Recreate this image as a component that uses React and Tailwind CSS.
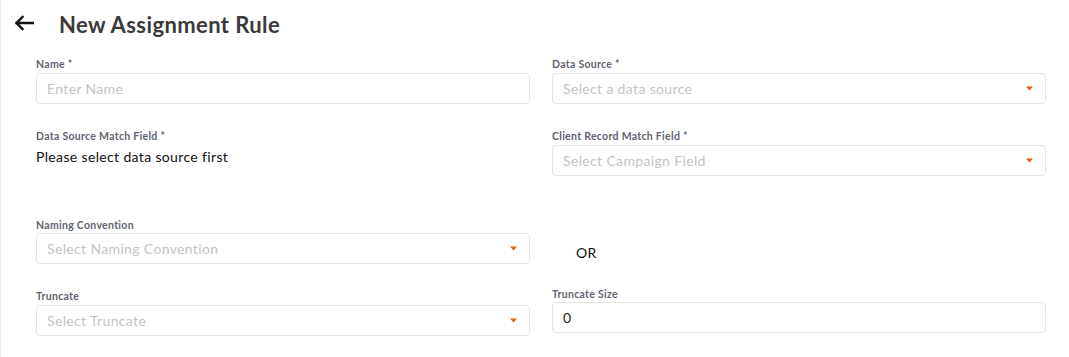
import React from "react";

const Caret = () => (
  <svg width="7" height="5" viewBox="0 0 7 5" className="shrink-0">
    <path d="M0 0.5 L7 0.5 L3.5 4.5 Z" fill="#e2620c" />
  </svg>
);

const Label = ({ children, className = "" }) => (
  <label className={`block text-[10.5px] font-bold tracking-[0.3px] text-[#5f6470] leading-[14px] ${className}`}>
    {children}
  </label>
);

const SelectBox = ({ placeholder }) => (
  <div className="flex items-center justify-between h-[31px] border border-[#e4e4e4] rounded-[4px] bg-white pl-[10px] pr-[12px]">
    <span className="text-[14px] tracking-[0.35px] text-[#c4c4c4]">{placeholder}</span>
    <Caret />
  </div>
);

const InputBox = ({ placeholder, value }) => (
  <div className="flex items-center h-[31px] border border-[#e4e4e4] rounded-[4px] bg-white px-[10px]">
    {value !== undefined ? (
      <span className="text-[14px] text-[#222]">{value}</span>
    ) : (
      <span className="text-[14px] tracking-[0.35px] text-[#c4c4c4]">{placeholder}</span>
    )}
  </div>
);

const App = () => {
  return (
    <div
      className="w-[1069px] h-[357px] bg-white border-l border-[#ececec] overflow-hidden"
      style={{ fontFamily: "Lato, 'Noto Sans', sans-serif" }}
    >
      <div className="flex items-center h-[48px] pl-[13px]">
        <svg width="20" height="16" viewBox="0 0 20 16" className="mt-[-3px]">
          <path
            d="M19 8 H2.5 M8.5 2 L2.5 8 L8.5 14"
            fill="none"
            stroke="#111"
            strokeWidth="2.4"
            strokeLinecap="square"
          />
        </svg>
        <h1 className="ml-[25px] text-[22px] font-bold tracking-[0.4px] text-[#3a3a3a]">
          New Assignment Rule
        </h1>
      </div>

      <div className="grid grid-cols-[494px_494px] gap-x-[22px] pl-[35px] mt-[9px]">
        <div>
          <Label className="mb-[2px]">Name *</Label>
          <InputBox placeholder="Enter Name" />
        </div>
        <div>
          <Label className="mb-[2px]">Data Source *</Label>
          <SelectBox placeholder="Select a data source" />
        </div>

        <div className="mt-[25px]">
          <Label>Data Source Match Field *</Label>
          <p className="text-[14px] tracking-[0.35px] text-[#111] mt-[3px]">Please select data source first</p>
        </div>
        <div className="mt-[25px]">
          <Label className="mb-[2px]">Client Record Match Field *</Label>
          <SelectBox placeholder="Select Campaign Field" />
        </div>

        <div className="mt-[42px]">
          <Label className="mb-[1px]">Naming Convention</Label>
          <SelectBox placeholder="Select Naming Convention" />
        </div>
        <div className="mt-[42px] flex items-end">
          <div className="h-[31px] flex items-center pl-[24px] text-[14px] tracking-[0.35px] text-[#111] mb-[-4px]">OR</div>
        </div>

        <div className="mt-[25px]">
          <Label className="mb-[2px]">Truncate</Label>
          <SelectBox placeholder="Select Truncate" />
        </div>
        <div className="mt-[23px]">
          <Label className="mb-[1px]">Truncate Size</Label>
          <InputBox value="0" />
        </div>
      </div>
    </div>
  );
};

export default App;
